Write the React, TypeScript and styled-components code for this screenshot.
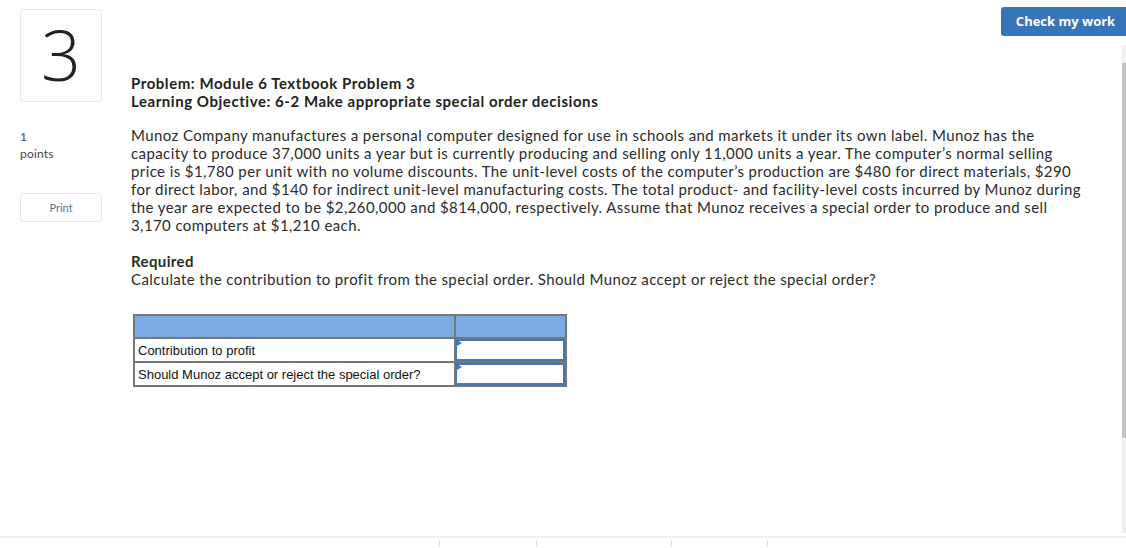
import React from 'react';
import styled, { createGlobalStyle } from 'styled-components';

const GlobalStyle = createGlobalStyle`
  html, body {
    margin: 0;
    padding: 0;
    background: #fff;
  }
  body {
    font-family: Lato, 'Open Sans', Arial, sans-serif;
    color: #2b2b2b;
    overflow: hidden;
  }
`;

const paragraph = [
  'Munoz Company manufactures a personal computer designed for use in schools and markets it under its own label. Munoz has the',
  'capacity to produce 37,000 units a year but is currently producing and selling only 11,000 units a year. The computer’s normal selling',
  'price is $1,780 per unit with no volume discounts. The unit-level costs of the computer’s production are $480 for direct materials, $290',
  'for direct labor, and $140 for indirect unit-level manufacturing costs. The total product- and facility-level costs incurred by Munoz during',
  'the year are expected to be $2,260,000 and $814,000, respectively. Assume that Munoz receives a special order to produce and sell',
  '3,170 computers at $1,210 each.',
];

const rows = [
  { label: 'Contribution to profit' },
  { label: 'Should Munoz accept or reject the special order?' },
];

const App = () => {
  return (
    <>
      <GlobalStyle />
      <Page>
        <Columns>
          <Sidebar>
            <NumberBox>3</NumberBox>
            <Points>
              <span>1</span>
              <span>points</span>
            </Points>
            <PrintButton>Print</PrintButton>
          </Sidebar>
          <Main>
            <Toolbar>
              <CheckButton>Check my work</CheckButton>
            </Toolbar>
            <Body>
              <Content>
                <Heading>
                  <div>Problem: Module 6 Textbook Problem 3</div>
                  <div>Learning Objective: 6-2 Make appropriate special order decisions</div>
                </Heading>
                <Paragraph>
                  {paragraph.map((line) => (
                    <Line key={line}>{line}</Line>
                  ))}
                </Paragraph>
                <Required>
                  <strong>Required</strong>
                  <Line>Calculate the contribution to profit from the special order. Should Munoz accept or reject the special order?</Line>
                </Required>
                <AnswerTable>
                  <tbody>
                    <tr>
                      <HeadCell $wide />
                      <HeadCell />
                    </tr>
                    {rows.map((r) => (
                      <tr key={r.label}>
                        <LabelCell>{r.label}</LabelCell>
                        <InputCell>
                          <Marker />
                          <AnswerInput />
                        </InputCell>
                      </tr>
                    ))}
                  </tbody>
                </AnswerTable>
              </Content>
              <ScrollTrack>
                <ScrollThumb />
              </ScrollTrack>
            </Body>
          </Main>
        </Columns>
        <Footer>
          <Tick />
          <Tick $gap={97} />
          <Tick $gap={135} />
          <Tick $gap={96} />
        </Footer>
      </Page>
    </>
  );
};

const Page = styled.div`
  width: 1126px;
  height: 548px;
  display: flex;
  flex-direction: column;
  overflow: hidden;
`;

const Columns = styled.div`
  flex: 1;
  display: flex;
  min-height: 0;
`;

const Sidebar = styled.div`
  width: 82px;
  margin-left: 20px;
  padding-top: 9px;
  display: flex;
  flex-direction: column;
`;

const NumberBox = styled.div`
  height: 93px;
  box-sizing: border-box;
  border: 1px solid #e8e8e8;
  border-radius: 4px;
  display: flex;
  align-items: center;
  justify-content: center;
  padding-bottom: 4px;
  font-family: 'Open Sans', Lato, sans-serif;
  font-weight: 300;
  font-size: 70px;
  color: #222;
`;

const Points = styled.div`
  margin-top: 26px;
  display: flex;
  flex-direction: column;
  font-size: 12px;
  line-height: 17px;
  letter-spacing: 0.2px;
  color: #444;
`;

const PrintButton = styled.button`
  margin-top: 31px;
  height: 29px;
  border: 1px solid #e6e6e6;
  border-radius: 4px;
  background: #fff;
  font-family: Lato, sans-serif;
  font-size: 11px;
  color: #5d6c9a;
  padding: 0;
`;

const Main = styled.div`
  flex: 1;
  margin-left: 29px;
  display: flex;
  flex-direction: column;
  min-width: 0;
`;

const Toolbar = styled.div`
  display: flex;
  justify-content: flex-end;
  padding-top: 7px;
`;

const CheckButton = styled.button`
  width: 125px;
  height: 29px;
  border: none;
  border-radius: 3px 0 0 3px;
  background: #3874b9;
  color: #fff;
  font-family: 'Open Sans', Lato, sans-serif;
  font-weight: 700;
  font-size: 13px;
  padding: 0 0 2px 4px;
`;

const Body = styled.div`
  flex: 1;
  display: flex;
  min-height: 0;
  padding-top: 9px;
`;

const Content = styled.div`
  flex: 1;
  padding-top: 29px;
  min-width: 0;
`;

const Heading = styled.div`
  font-weight: 700;
  font-size: 15px;
  line-height: 18px;
  letter-spacing: 0.55px;
  color: #222;
`;

const Paragraph = styled.div`
  margin-top: 16px;
  font-size: 15px;
  line-height: 18px;
  letter-spacing: 0.4px;
  color: #2b2b2b;
`;

const Line = styled.div`
  white-space: nowrap;
`;

const Required = styled.div`
  margin-top: 18px;
  font-size: 15px;
  line-height: 18px;
  letter-spacing: 0.38px;

  strong {
    font-weight: 700;
  }
`;

const AnswerTable = styled.table`
  margin: 26px 0 0 2px;
  border-collapse: collapse;
  font-family: 'Liberation Sans', Arial, sans-serif;
  font-size: 13px;
`;

const HeadCell = styled.td<{ $wide?: boolean }>`
  width: ${({ $wide }) => ($wide ? '319px' : '109px')};
  height: 21px;
  background: #7aace3;
  border: 2px solid #777;
  padding: 0;
`;

const LabelCell = styled.td`
  height: 20px;
  border: 2px solid #777;
  padding: 0 3px;
  color: #111;
`;

const InputCell = styled.td`
  position: relative;
  border: 2px solid #777;
  padding: 0;
`;

const Marker = styled.span`
  position: absolute;
  left: 1px;
  top: 1px;
  width: 0;
  height: 0;
  border-top: 3px solid transparent;
  border-bottom: 3px solid transparent;
  border-left: 5px solid #3c78c8;
`;

const AnswerInput = styled.div`
  height: 22px;
  box-sizing: border-box;
  border: 2px solid #4a76b0;
  border-left-width: 1px;
`;

const ScrollTrack = styled.div`
  width: 4px;
  margin-bottom: 3px;
  background: #f0f0f0;
  display: flex;
  flex-direction: column;
`;

const ScrollThumb = styled.div`
  margin-top: 18px;
  height: 375px;
  background: #c4c4c4;
`;

const Footer = styled.div`
  height: 10px;
  border-top: 2px solid #f0f0f0;
  display: flex;
  padding-left: 439px;
`;

const Tick = styled.span<{ $gap?: number }>`
  width: 1px;
  height: 7px;
  margin-top: 2px;
  margin-left: ${({ $gap }) => ($gap ? `${$gap - 1}px` : '0')};
  background: #ddd;
`;

export default App;
